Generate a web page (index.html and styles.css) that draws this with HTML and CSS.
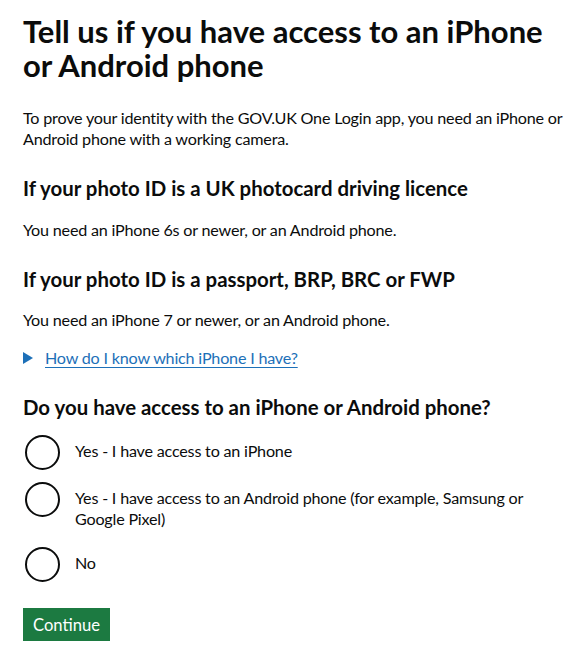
FILE: index.html
```html
<!DOCTYPE html>
<html lang="en">
<head>
<meta charset="utf-8">
<title>Tell us if you have access to an iPhone or Android phone</title>
<link rel="stylesheet" href="styles.css">
</head>
<body>
<main class="page">
  <h1 class="heading-l">Tell us if you have access to an iPhone or Android phone</h1>
  <p class="body">To prove your identity with the GOV.UK One Login app, you need an iPhone or Android phone with a working camera.</p>

  <h2 class="heading-m">If your photo ID is a UK photocard driving licence</h2>
  <p class="body">You need an iPhone 6s or newer, or an Android phone.</p>

  <h2 class="heading-m">If your photo ID is a passport, BRP, BRC or FWP</h2>
  <p class="body">You need an iPhone 7 or newer, or an Android phone.</p>

  <div class="details">
    <span class="details-marker"></span>
    <a class="details-link" href="#">How do I know which iPhone I have?</a>
  </div>

  <form class="form">
    <fieldset class="fieldset">
      <legend class="legend">Do you have access to an iPhone or Android phone?</legend>
      <div class="radios">
        <label class="radio-item">
          <span class="radio-circle"></span>
          <span class="radio-label">Yes - I have access to an iPhone</span>
        </label>
        <label class="radio-item">
          <span class="radio-circle"></span>
          <span class="radio-label">Yes - I have access to an Android phone (for example, Samsung or Google Pixel)</span>
        </label>
        <label class="radio-item">
          <span class="radio-circle"></span>
          <span class="radio-label">No</span>
        </label>
      </div>
    </fieldset>
    <button class="button" type="button">Continue</button>
  </form>
</main>
</body>
</html>
```
FILE: styles.css
```css
* { box-sizing: border-box; }

body {
  margin: 0;
  background: #ffffff;
  color: #0b0c0c;
  font-family: Lato, "Noto Sans", sans-serif;
}

.page {
  padding: 14px 16px 0 23px;
}

.heading-l {
  max-width: 530px;
  margin: 0 0 25px;
  font-size: 31px;
  line-height: 34px;
  font-weight: 700;
}

.body {
  margin: 0 0 17px;
  font-size: 16.15px;
  line-height: 21px;
  letter-spacing: -0.2px;
}

.heading-m {
  margin: 27px 0 17px;
  font-size: 20.4px;
  line-height: 25.5px;
  font-weight: 700;
}

.details {
  display: flex;
  align-items: center;
  gap: 12px;
  margin: 0 0 27px;
  font-size: 16.15px;
  line-height: 21px;
  letter-spacing: -0.2px;
}

.details-marker {
  width: 0;
  height: 0;
  border-style: solid;
  border-width: 6px 0 6px 10.4px;
  border-color: transparent transparent transparent #1d70b8;
}

.details-link {
  color: #1d70b8;
  text-decoration: underline;
  text-decoration-thickness: 1px;
  text-underline-offset: 3px;
}

.form { margin: 0; }

.fieldset {
  margin: 0 0 26px;
  padding: 0;
  border: 0;
}

.legend {
  padding: 0;
  margin: 0 0 14px;
  font-size: 20.4px;
  line-height: 25.5px;
  font-weight: 700;
}

.radios {
  display: flex;
  flex-direction: column;
  gap: 12px;
}

.radio-item {
  display: flex;
  align-items: flex-start;
  min-height: 34px;
}

.radio-circle {
  flex: none;
  width: 35px;
  height: 35px;
  margin-left: 2px;
  border: 2px solid #0b0c0c;
  border-radius: 50%;
  background: #ffffff;
}

.radio-label {
  padding: 5.5px 10px 5.5px 15px;
  font-size: 16.15px;
  line-height: 21px;
  letter-spacing: -0.2px;
}

.button {
  display: inline-block;
  margin: 0;
  padding: 7px 10px 6px;
  border: 0;
  border-radius: 0;
  background: #1c7a41;
  box-shadow: 0 2px 0 #0d3a1f;
  color: #ffffff;
  font-family: inherit;
  font-size: 16.6px;
  line-height: 20px;
  cursor: pointer;
}
```
